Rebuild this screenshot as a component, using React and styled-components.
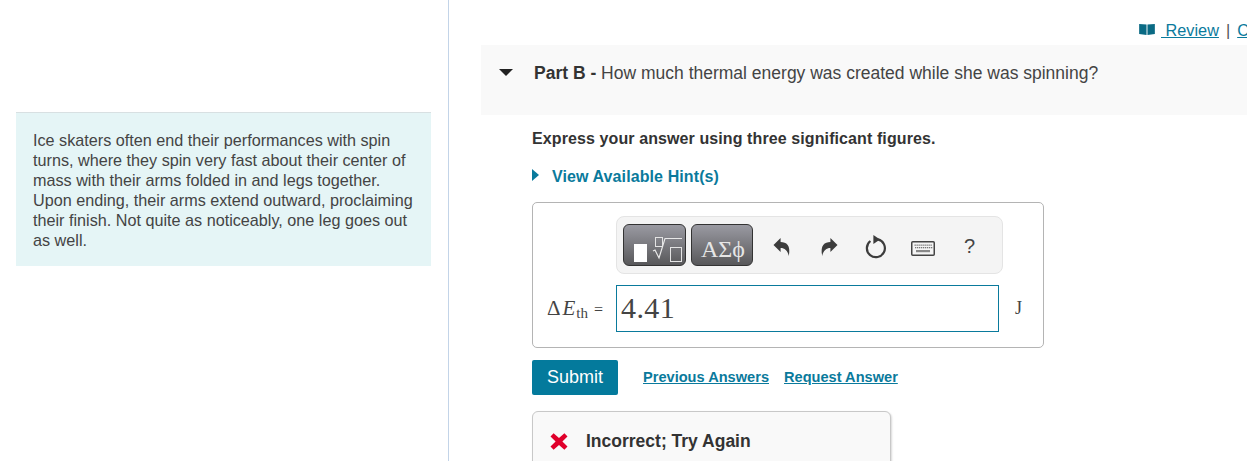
import styled, { createGlobalStyle } from "styled-components";

const GlobalStyle = createGlobalStyle`
  html, body {
    margin: 0;
    padding: 0;
    height: 461px;
    overflow: hidden;
    background: #fff;
  }
  body {
    font-family: "Liberation Sans", Arial, sans-serif;
    color: #333;
  }
`;

function ReplyIcon({ flip }) {
  return (
    <ArrowSvg viewBox="0 0 18 18" $flip={flip}>
      <path
        d="M0.5 7 L7.6 0 V4 C13.4 4 18 7 15.8 18 C14.8 12.5 11.4 10 7.6 10 V14 Z"
        fill="#3c3c3c"
      />
    </ArrowSvg>
  );
}

function ResetIcon() {
  return (
    <svg width="22" height="24" viewBox="0 0 22 24">
      <path
        d="M13 4.4 A9 9 0 1 1 5.4 6"
        fill="none"
        stroke="#3c3c3c"
        strokeWidth="2.2"
      />
      <path d="M8.4 0 L15 4.6 L8.4 9 Z" fill="#3c3c3c" />
    </svg>
  );
}

function KeyboardIcon() {
  const keys = [];
  for (let i = 0; i < 9; i++) {
    keys.push(<rect key={"a" + i} x={3.5 + i * 2} y="3.5" width="1.3" height="1.3" />);
    keys.push(<rect key={"b" + i} x={4 + i * 2} y="6" width="1.3" height="1.3" />);
  }
  return (
    <KeyboardSvg viewBox="0 0 24 15">
      <rect x="0.75" y="0.75" width="22.5" height="13.5" rx="1" fill="#f4f4f4" stroke="#444" strokeWidth="1.5" />
      <g fill="#777">{keys}</g>
      <rect x="5" y="9" width="14" height="2.2" fill="#888" />
    </KeyboardSvg>
  );
}

function TemplateIcon() {
  return (
    <svg width="61" height="40" viewBox="0 0 61 40">
      <rect x="10" y="19" width="13" height="18" fill="#fff" />
      <rect x="31.5" y="12.5" width="7" height="9" fill="none" stroke="#e4e4e4" strokeWidth="1" />
      <path d="M29 26 L31 25 L35 33 L41 13.5 H58" fill="none" stroke="#e8e8e8" strokeWidth="1.2" />
      <rect x="46.5" y="22.5" width="11" height="14" fill="none" stroke="#e4e4e4" strokeWidth="1" />
    </svg>
  );
}

export default function App() {
  return (
    <Page>
      <GlobalStyle />
      <LeftColumn>
        <Note>
          Ice skaters often end their performances with spin turns, where they
          spin very fast about their center of mass with their arms folded in
          and legs together. Upon ending, their arms extend outward, proclaiming
          their finish. Not quite as noticeably, one leg goes out as well.
        </Note>
      </LeftColumn>
      <RightColumn>
        <TopBar>
          <BookIcon viewBox="0 0 17 13">
            <path d="M0 1 L8 1.6 V13 L0 12 Z M9 1.6 L17 1 V12 L9 13 Z" fill="#0a6a84" />
          </BookIcon>
          <TopLink>&nbsp;Review</TopLink>
          <Pipe>|</Pipe>
          <TopLink>C</TopLink>
        </TopBar>
        <PartHeader>
          <Caret />
          <PartTitle>
            <b>Part B - </b>How much thermal energy was created while she was spinning?
          </PartTitle>
        </PartHeader>
        <PartBody>
          <Instruction>Express your answer using three significant figures.</Instruction>
          <HintRow>
            <HintCaret />
            <HintLink>View Available Hint(s)</HintLink>
          </HintRow>
          <AnswerBox>
            <Toolbar>
              <DarkButton $width={63}>
                <TemplateIcon />
              </DarkButton>
              <DarkButton $width={62}>
                <Greek>ΑΣϕ</Greek>
              </DarkButton>
              <ToolGroup>
                <ToolSlot><ReplyIcon /></ToolSlot>
                <ToolSlot><ReplyIcon flip /></ToolSlot>
                <ToolSlot><ResetIcon /></ToolSlot>
                <ToolSlot><KeyboardIcon /></ToolSlot>
                <ToolSlot><Help>?</Help></ToolSlot>
              </ToolGroup>
            </Toolbar>
            <InputRow>
              <Label>
                <Delta>Δ</Delta><i>E</i><sub>th</sub><small>=</small>
              </Label>
              <AnswerField>4.41</AnswerField>
              <Unit>J</Unit>
            </InputRow>
          </AnswerBox>
          <ActionRow>
            <SubmitButton>Submit</SubmitButton>
            <ActionLink>Previous Answers</ActionLink>
            <ActionLink>Request Answer</ActionLink>
          </ActionRow>
          <Feedback>
            <svg width="18" height="17" viewBox="0 0 18 17">
              <path d="M0.5 3.4 L3.6 0.2 L9 5 L14.4 0.2 L17.5 3.4 L12.4 8.5 L17.5 13.6 L14.4 16.8 L9 12 L3.6 16.8 L0.5 13.6 L5.6 8.5 Z" fill="#e0002b" />
            </svg>
            <FeedbackText>Incorrect; Try Again</FeedbackText>
          </Feedback>
        </PartBody>
      </RightColumn>
    </Page>
  );
}

const Page = styled.div`
  display: flex;
  width: 1247px;
  height: 461px;
  overflow: hidden;
`;

const LeftColumn = styled.div`
  box-sizing: border-box;
  flex: 0 0 449px;
  height: 461px;
  padding: 112px 17px 0 16px;
  border-right: 1px solid #c3d4e8;
`;

const Note = styled.div`
  box-sizing: border-box;
  height: 154px;
  padding: 17px 17px 0 17px;
  background: #e5f5f6;
  border-top: 1px solid #d8e0e2;
  font-size: 16.2px;
  line-height: 20px;
  color: #444;
`;

const RightColumn = styled.div`
  flex: 1;
  min-width: 0;
  padding-left: 32px;
`;

const TopBar = styled.div`
  display: flex;
  align-items: center;
  height: 45px;
  padding: 15px 0 0 658px;
  box-sizing: border-box;
  white-space: nowrap;
  font-size: 16.3px;
  overflow: hidden;
`;

const BookIcon = styled.svg`
  flex: none;
  width: 16px;
  height: 12px;
  margin: 0 6px 3px 0;
`;

const TopLink = styled.span`
  color: #0a7a9c;
  text-decoration: underline;
`;

const Pipe = styled.span`
  margin: 0 7px;
  color: #555;
`;

const PartHeader = styled.div`
  display: flex;
  height: 70px;
  padding: 18px 0 0 18px;
  box-sizing: border-box;
  background: #f9f9f9;
`;

const Caret = styled.div`
  width: 0;
  height: 0;
  margin: 6px 21px 0 0;
  border-left: 7px solid transparent;
  border-right: 7px solid transparent;
  border-top: 7px solid #222;
`;

const PartTitle = styled.div`
  font-size: 17.5px;
  line-height: 20px;
  color: #444;

  b {
    color: #333;
  }
`;

const PartBody = styled.div`
  padding: 14px 0 0 51px;
`;

const Instruction = styled.div`
  font-size: 16px;
  font-weight: bold;
  line-height: 20px;
  letter-spacing: 0.1px;
  color: #333;
`;

const HintRow = styled.div`
  display: flex;
  align-items: center;
  margin-top: 18px;
  height: 20px;
`;

const HintCaret = styled.div`
  width: 0;
  height: 0;
  margin: 0 13px 4px 0;
  border-top: 6px solid transparent;
  border-bottom: 6px solid transparent;
  border-left: 7px solid #0a7a9c;
`;

const HintLink = styled.span`
  font-size: 16px;
  font-weight: bold;
  letter-spacing: 0.1px;
  color: #0a7a9c;
`;

const AnswerBox = styled.div`
  box-sizing: border-box;
  width: 512px;
  height: 146px;
  margin-top: 15px;
  padding: 13px 0 0 83px;
  border: 1px solid #b4b4b4;
  border-radius: 5px;
`;

const Toolbar = styled.div`
  box-sizing: border-box;
  display: flex;
  align-items: center;
  gap: 5px;
  width: 387px;
  height: 58px;
  padding: 0 0 0 6px;
  background: #f4f4f4;
  border: 1px solid #e4e4e4;
  border-radius: 8px;
`;

const DarkButton = styled.div`
  box-sizing: border-box;
  display: flex;
  align-items: center;
  justify-content: center;
  width: ${(p) => p.$width}px;
  height: 42px;
  background: linear-gradient(#9a9aa2, #58585a);
  border: 1px solid #333;
  border-radius: 6px;
  overflow: hidden;
`;

const Greek = styled.span`
  padding: 7px 0 0 2px;
  font-family: "Liberation Serif", "Times New Roman", serif;
  font-size: 24px;
  line-height: 30px;
  color: #e6e6e6;
`;

const ToolGroup = styled.div`
  display: flex;
  align-items: center;
  padding-top: 3px;
`;

const ToolSlot = styled.div`
  display: flex;
  align-items: center;
  justify-content: center;
  width: 47px;
  height: 30px;
`;

const ArrowSvg = styled.svg`
  width: 18px;
  height: 18px;
  transform: ${(p) => (p.$flip ? "scaleX(-1)" : "none")};
`;

const KeyboardSvg = styled.svg`
  width: 24px;
  height: 15px;
  margin-top: 4px;
`;

const Help = styled.span`
  font-size: 20px;
  color: #444;
`;

const InputRow = styled.div`
  display: flex;
  align-items: center;
  height: 47px;
  margin: 11px 0 0 -70px;
`;

const Label = styled.div`
  display: flex;
  align-items: baseline;
  box-sizing: border-box;
  width: 70px;
  padding-left: 1px;
  white-space: pre;
  font-family: "Liberation Serif", "Times New Roman", serif;
  font-size: 21px;
  color: #444;

  i {
    letter-spacing: 1px;
  }

  sub {
    font-size: 15px;
    vertical-align: baseline;
    transform: translateY(3px);
  }

  small {
    margin-left: 6px;
    font-size: 16px;
  }
`;

const Delta = styled.span`
  letter-spacing: 2px;
`;

const AnswerField = styled.div`
  box-sizing: border-box;
  width: 383px;
  height: 47px;
  padding-left: 4px;
  border: 1px solid #0a7a9c;
  font-family: "Liberation Serif", "Times New Roman", serif;
  font-size: 30px;
  line-height: 43px;
  letter-spacing: 0.4px;
  color: #444;
`;

const Unit = styled.div`
  margin-left: 15px;
  padding-left: 1px;
  font-family: "Liberation Serif", "Times New Roman", serif;
  font-size: 18px;
  color: #444;
`;

const ActionRow = styled.div`
  display: flex;
  align-items: center;
  margin-top: 12px;
`;

const SubmitButton = styled.div`
  width: 86px;
  height: 35px;
  margin-right: 25px;
  background: #047a9c;
  border-radius: 2px;
  font-size: 18px;
  line-height: 35px;
  text-align: center;
  color: #fff;
`;

const ActionLink = styled.span`
  margin: 0 15px 2px 0;
  font-size: 14.6px;
  font-weight: bold;
  color: #0a7a9c;
  text-decoration: underline;
`;

const Feedback = styled.div`
  box-sizing: border-box;
  display: flex;
  align-items: center;
  width: 359px;
  height: 80px;
  margin-top: 16px;
  padding: 0 0 20px 17px;
  background: #f9f9f9;
  border: 1px solid #c8c8c8;
  border-radius: 6px;
  box-shadow: 1px 1px 2px rgba(0, 0, 0, 0.15);
`;

const FeedbackText = styled.span`
  margin-left: 18px;
  font-size: 17.5px;
  font-weight: bold;
  color: #333;
`;
